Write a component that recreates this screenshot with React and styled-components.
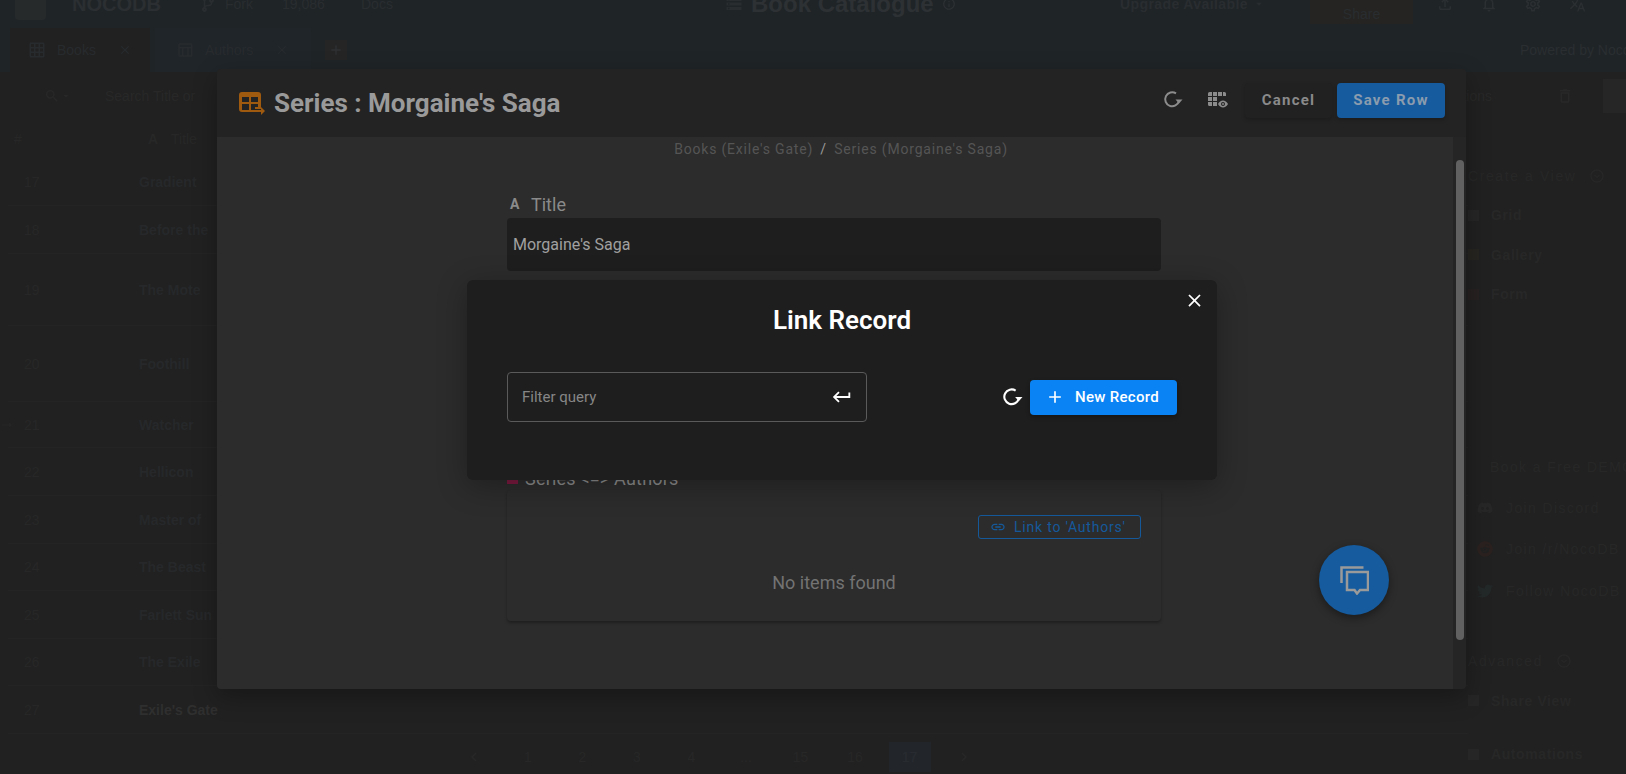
import React from "react";
import styled, { createGlobalStyle } from "styled-components";
import {
  MdAdd,
  MdClose,
  MdKeyboardReturn,
  MdLink,
  MdChevronLeft,
  MdChevronRight,
  MdGridOn,
  MdOutlineTableChart,
  MdSearch,
  MdOutlineCalendarMonth,
  MdDeleteOutline,
  MdOutlineFileUpload,
  MdNotificationsNone,
  MdTranslate,
  MdArrowRightAlt,
  MdArrowDropDown,
  MdOutlineInfo,
  MdOutlineExpandCircleDown,
  MdOutlineStorage,
  MdOutlineSettings,
} from "react-icons/md";
import { FaDiscord, FaReddit, FaTwitter, FaCodeBranch } from "react-icons/fa";

const rows = [
  { num: 17, title: "Gradient", height: 48 },
  { num: 18, title: "Before the", height: 48 },
  { num: 19, title: "The Mote", height: 72 },
  { num: 20, title: "Foothill", height: 76 },
  { num: 21, title: "Watcher", height: 46, current: true },
  { num: 22, title: "Hellicon", height: 48 },
  { num: 23, title: "Master of", height: 48 },
  { num: 24, title: "The Beast", height: 47 },
  { num: 25, title: "Farlett Sun", height: 48 },
  { num: 26, title: "The Exile", height: 47 },
  { num: 27, title: "Exile's Gate", height: 48, strong: true },
];

const pages = ["1", "2", "3", "4", "...", "15", "16", "17"];

const RefreshIcon = ({ size = 20 }) => (
  <svg width={size} height={size} viewBox="0 0 20 20" fill="none">
    <path d="M16 11a7 7 0 1 1-3-7.600" stroke="currentColor" strokeWidth="2" />
    <path d="M12.500 9.500h7L16 13.500z" fill="currentColor" />
  </svg>
);

const TableArrowIcon = () => (
  <svg width="26" height="23" viewBox="0 0 26 23">
    <path
      fillRule="evenodd"
      fill="#a05a10"
      d="M3 0h16a3 3 0 0 1 3 3v14h-6v3H3a3 3 0 0 1-3-3V3a3 3 0 0 1 3-3zM3 5v5h7V5zm9 0v5h7V5zM3 12v6h7v-6zm9 0v6h4v-3h3v-3z"
    />
    <path d="M15 18h7v-3l4 4-4 4v-3h-7z" fill="#a05a10" />
  </svg>
);

const TableEyeIcon = () => (
  <svg width="20" height="16" viewBox="0 0 20 16" fill="#8c8c8c">
    <path d="M0 1.500A1.500 1.500 0 0 1 1.500 0H4v4H0zM5 0h4v4H5zM10 0h4v4h-4zM15 0h1.500A1.500 1.500 0 0 1 18 1.500V4h-3zM0 5h4v4H0zM5 5h4v4H5zM0 10h4v4H1.500A1.500 1.500 0 0 1 0 12.500zM5 10h4v4H5z" />
    <path
      fillRule="evenodd"
      d="M10 12c1.200-2.200 3-3.400 5-3.400s3.800 1.200 5 3.400c-1.200 2.200-3 3.400-5 3.400s-3.800-1.200-5-3.400zm5 2a2 2 0 1 0 0-4 2 2 0 0 0 0 4z"
    />
    <circle cx="15" cy="12" r="1" />
  </svg>
);

const ChatIcon = () => (
  <svg width="30" height="30" viewBox="0 0 30 30" fill="none" stroke="#9a9a9a" strokeWidth="2.500">
    <path d="M2.500 18V2.500h22" />
    <path d="M8 7h21v18h-8l-3 3.500-2.500-3.500H8z" />
  </svg>
);

const App = () => (
  <Page>
    <GlobalStyle />

    <TopBar>
      <Logo />
      <Brand>NOCODB</Brand>
      <TopLink $width={82}>
        <FaCodeBranch size={16} />
        Fork
      </TopLink>
      <TopLink $width={79}>19,086</TopLink>
      <TopLink $width={364}>Docs</TopLink>
      <ProjectIcon>
        <MdOutlineStorage size={18} />
      </ProjectIcon>
      <ProjectName>
        Book Catalogue
        <MdOutlineInfo size={14} />
      </ProjectName>
      <Upgrade>
        Upgrade Available
        <MdArrowDropDown size={14} />
      </Upgrade>
      <ShareButton>Share</ShareButton>
      <TopIcons>
        <MdOutlineFileUpload size={18} />
        <MdNotificationsNone size={18} />
        <MdOutlineSettings size={18} />
        <MdTranslate size={18} />
      </TopIcons>
    </TopBar>

    <TabBar>
      <Tab $active>
        <MdGridOn size={18} />
        Books
        <TabClose>
          <MdClose size={14} />
        </TabClose>
      </Tab>
      <Tab>
        <MdOutlineTableChart size={18} />
        Authors
        <TabClose>
          <MdClose size={14} />
        </TabClose>
      </Tab>
      <AddTab>
        <MdAdd size={16} />
      </AddTab>
      <Powered>Powered by NocoDB</Powered>
    </TabBar>

    <Toolbar>
      <MdSearch size={16} />
      <MdArrowDropDown size={12} />
      <SearchText>Search Title or</SearchText>
      <ToolbarOptions>Options</ToolbarOptions>
      <ToolbarTrash>
        <MdDeleteOutline size={18} />
      </ToolbarTrash>
      <ToolbarBox />
    </Toolbar>

    <Main>
      <TableArea>
        <HeaderRow>
          <HeaderNum>#</HeaderNum>
          <HeaderGlyph>A</HeaderGlyph>
          <span>Title</span>
        </HeaderRow>
        {rows.map((row) => (
          <Row key={row.num} $height={row.height}>
            {row.current && (
              <RowMarker>
                <MdArrowRightAlt size={14} />
              </RowMarker>
            )}
            <RowNum>{row.num}</RowNum>
            <RowTitle $strong={row.strong}>{row.title}</RowTitle>
          </Row>
        ))}
        <Pagination>
          <PageItem>
            <MdChevronLeft size={18} />
          </PageItem>
          {pages.map((page) => (
            <PageItem key={page} $active={page === "17"}>
              {page}
            </PageItem>
          ))}
          <PageItem>
            <MdChevronRight size={18} />
          </PageItem>
        </Pagination>
      </TableArea>

      <Sidebar>
        <SideHeading>
          Create a View
          <MdOutlineExpandCircleDown size={16} />
        </SideHeading>
        <SideItem>
          <SideDot $color="#262626" />
          Grid
        </SideItem>
        <SideItem>
          <SideDot $color="#272520" />
          Gallery
        </SideItem>
        <SideItem>
          <SideDot $color="#272121" />
          Form
        </SideItem>
        <SupportList>
          <SupportItem>
            <MdOutlineCalendarMonth size={16} />
            Book a Free DEMO
          </SupportItem>
          <SupportItem>
            <FaDiscord size={16} />
            Join Discord
          </SupportItem>
          <SupportItem>
            <FaReddit size={16} color="#2b2220" />
            Join /r/NocoDB
          </SupportItem>
          <SupportItem>
            <FaTwitter size={16} color="#232829" />
            Follow NocoDB
          </SupportItem>
        </SupportList>
        <SideHeading>
          Advanced
          <MdOutlineExpandCircleDown size={16} />
        </SideHeading>
        <SideItem>
          <SideDot $color="#262626" />
          Share View
        </SideItem>
        <SideItem $gap>
          <SideDot $color="#262626" />
          Automations
        </SideItem>
      </Sidebar>
    </Main>

    <RowDialog>
      <DialogHeader>
        <TableArrowIcon />
        <DialogTitle>Series : Morgaine's Saga</DialogTitle>
        <HeaderActions>
          <HeaderIcon>
            <RefreshIcon />
          </HeaderIcon>
          <HeaderIcon>
            <TableEyeIcon />
          </HeaderIcon>
          <CancelButton>Cancel</CancelButton>
          <SaveButton>Save Row</SaveButton>
        </HeaderActions>
      </DialogHeader>
      <DialogBody>
        <BodyScroll>
          <Breadcrumb>
            Books (Exile's Gate) <Slash>/</Slash> Series (Morgaine's Saga)
          </Breadcrumb>
          <Form>
            <FieldLabel>
              <TitleGlyph>A</TitleGlyph>
              Title
            </FieldLabel>
            <TitleValue>Morgaine's Saga</TitleValue>
            <LinkLabel>
              <RelationIcon />
              Series &lt;=&gt; Authors
            </LinkLabel>
            <LinkCard>
              <LinkButton>
                <MdLink size={16} />
                Link to 'Authors'
              </LinkButton>
              <EmptyText>No items found</EmptyText>
            </LinkCard>
          </Form>
        </BodyScroll>
        <ScrollTrack>
          <ScrollThumb />
        </ScrollTrack>
      </DialogBody>
    </RowDialog>

    <ChatButton>
      <ChatIcon />
    </ChatButton>

    <LinkDialog>
      <CloseButton>
        <MdClose size={21} />
      </CloseButton>
      <LinkTitle>Link Record</LinkTitle>
      <LinkControls>
        <FilterBox>
          <FilterText>Filter query</FilterText>
          <MdKeyboardReturn size={22} color="#fff" />
        </FilterBox>
        <LinkActions>
          <ReloadButton>
            <RefreshIcon size={21} />
          </ReloadButton>
          <NewRecordButton>
            <MdAdd size={20} />
            New Record
          </NewRecordButton>
        </LinkActions>
      </LinkControls>
    </LinkDialog>
  </Page>
);

const GlobalStyle = createGlobalStyle`
  html, body {
    margin: 0;
    padding: 0;
    background: #212121;
  }

  * {
    box-sizing: border-box;
  }
`;

const Page = styled.div`
  position: relative;
  width: 1626px;
  height: 774px;
  overflow: hidden;
  background: #212121;
  color: #272727;
  font-family: "Liberation Sans", Arial, sans-serif;
`;

/* dimmed app behind the dialogs */
const TopBar = styled.div`
  display: flex;
  align-items: center;
  height: 28px;
  padding: 0 0 20px 15px;
  background: #1f2427;
  color: #292d30;
  font-size: 14px;
`;

const Logo = styled.div`
  flex: none;
  width: 31px;
  height: 32px;
  margin-right: 26px;
  border-radius: 10px 10px 4px 4px;
  background: #272a2b;
`;

const Brand = styled.span`
  flex: none;
  width: 128px;
  font-size: 20px;
  font-weight: 700;
  color: #2b2f32;
`;

const TopLink = styled.span`
  flex: none;
  display: flex;
  align-items: center;
  gap: 9px;
  width: ${(p) => p.$width}px;
`;

const ProjectIcon = styled.span`
  flex: none;
  display: flex;
  width: 26px;
`;

const ProjectName = styled.span`
  flex: none;
  display: flex;
  align-items: center;
  gap: 8px;
  width: 369px;
  font-size: 24px;
  font-weight: 700;
  color: #2d3134;
  white-space: nowrap;
`;

const Upgrade = styled.span`
  flex: none;
  display: flex;
  align-items: center;
  gap: 4px;
  width: 190px;
  font-weight: 700;
  letter-spacing: 0.4px;
  white-space: nowrap;
`;

const ShareButton = styled.div`
  flex: none;
  width: 103px;
  height: 40px;
  padding-top: 22px;
  text-align: center;
  background: #252422;
`;

const TopIcons = styled.div`
  flex: none;
  display: flex;
  gap: 26px;
  margin-left: 23px;
  color: #2b2f32;
`;

const TabBar = styled.div`
  display: flex;
  align-items: stretch;
  height: 44px;
  padding-left: 10px;
  background: #1f2427;
  font-size: 14px;
`;

const Tab = styled.div`
  display: flex;
  align-items: center;
  gap: 11px;
  width: ${(p) => (p.$active ? "140px" : "156px")};
  margin-right: 5px;
  padding-left: ${(p) => (p.$active ? "18px" : "21px")};
  background: ${(p) => (p.$active ? "#212121" : "#1f2529")};
  color: #282b2e;
`;

const TabClose = styled.span`
  display: flex;
  margin-left: 11px;
`;

const AddTab = styled.div`
  display: flex;
  align-items: center;
  justify-content: center;
  align-self: center;
  width: 22px;
  height: 20px;
  margin-left: 9px;
  background: #252525;
  color: #2e3133;
`;

const Powered = styled.span`
  align-self: center;
  margin-left: auto;
  width: 106px;
  white-space: nowrap;
  color: #2a2e31;
`;

const Toolbar = styled.div`
  display: flex;
  align-items: center;
  height: 48px;
  padding-left: 44px;
  color: #282828;
  font-size: 14px;
`;

const SearchText = styled.span`
  margin-left: 33px;
`;

const ToolbarOptions = styled.span`
  margin-left: auto;
`;

const ToolbarTrash = styled.span`
  display: flex;
  margin: 0 29px 0 64px;
`;

const ToolbarBox = styled.div`
  width: 23px;
  height: 34px;
  background: #262626;
`;

const Main = styled.div`
  display: flex;
  height: 654px;
`;

const TableArea = styled.div`
  flex: 1;
  padding-left: 8px;
`;

const HeaderRow = styled.div`
  display: flex;
  align-items: center;
  height: 38px;
  padding-left: 6px;
  font-size: 14px;
`;

const HeaderNum = styled.span`
  width: 134px;
`;

const HeaderGlyph = styled.span`
  width: 23px;
  font-weight: 700;
`;

const Row = styled.div`
  position: relative;
  display: flex;
  align-items: center;
  height: ${(p) => p.$height}px;
  padding-left: 16px;
  border-bottom: 1px solid #242424;
  font-size: 14px;
`;

const RowMarker = styled.span`
  position: absolute;
  left: -8px;
  display: flex;
`;

const RowNum = styled.span`
  width: 115px;
`;

const RowTitle = styled.span`
  font-weight: 700;
  color: ${(p) => (p.$strong ? "#2f2f2f" : "#26282a")};
`;

const Pagination = styled.div`
  display: flex;
  gap: 12.5px;
  margin-top: 8px;
  padding-left: 444.5px;
`;

const PageItem = styled.div`
  flex: none;
  display: flex;
  align-items: center;
  justify-content: center;
  width: 42px;
  height: 30px;
  font-size: 14px;
  color: ${(p) => (p.$active ? "#282c31" : "#272727")};
  background: ${(p) => (p.$active ? "#22262b" : "transparent")};
`;

const Sidebar = styled.div`
  flex: none;
  display: flex;
  flex-direction: column;
  width: 158px;
  padding-top: 44px;
  font-size: 14px;
`;

const SideHeading = styled.div`
  display: flex;
  align-items: center;
  gap: 13px;
  height: 24px;
  margin-bottom: 8px;
  letter-spacing: 1.6px;
  white-space: nowrap;
`;

const SideItem = styled.div`
  display: flex;
  align-items: center;
  gap: 12px;
  height: 40px;
  margin-top: ${(p) => (p.$gap ? "14px" : "0")};
  font-weight: 700;
  letter-spacing: 0.6px;
  white-space: nowrap;
`;

const SideDot = styled.span`
  flex: none;
  width: 11px;
  height: 11px;
  background: ${(p) => p.$color};
`;

const SupportList = styled.div`
  display: flex;
  flex-direction: column;
  margin: 132px 0 38px;
`;

const SupportItem = styled.div`
  display: flex;
  align-items: center;
  gap: 13px;
  height: 41.3px;
  padding-left: 9px;
  letter-spacing: 1.4px;
  white-space: nowrap;
`;

/* row editor */
const RowDialog = styled.div`
  position: absolute;
  top: 69px;
  left: 217px;
  display: flex;
  flex-direction: column;
  width: 1249px;
  height: 620px;
  overflow: hidden;
  border-radius: 4px;
  background: #232323;
  box-shadow: 0 8px 24px rgba(0, 0, 0, 0.3);
`;

const DialogHeader = styled.div`
  flex: none;
  display: flex;
  align-items: center;
  height: 68px;
  padding: 0 21px 0 22px;
  background: #232323;
`;

const DialogTitle = styled.h1`
  margin: 0 0 0 9px;
  color: #9a9a9a;
  font-family: Roboto, sans-serif;
  font-size: 26px;
  font-weight: 700;
`;

const HeaderActions = styled.div`
  display: flex;
  align-items: center;
  margin-left: auto;
  margin-top: -6px;
`;

const HeaderIcon = styled.div`
  display: flex;
  align-items: center;
  justify-content: center;
  width: 45px;
  color: #8c8c8c;
`;

const CancelButton = styled.div`
  display: flex;
  align-items: center;
  justify-content: center;
  width: 87px;
  height: 35px;
  margin: 0 5px 0 5px;
  border-radius: 4px;
  background: #212121;
  box-shadow: 0 2px 4px rgba(0, 0, 0, 0.2);
  color: #8a8a8a;
  font-family: Roboto, sans-serif;
  font-size: 15px;
  font-weight: 700;
  letter-spacing: 1.25px;
`;

const SaveButton = styled(CancelButton)`
  width: 108px;
  margin: 0;
  background: #155b9e;
  color: #8a9cae;
`;

const DialogBody = styled.div`
  flex: 1;
  display: flex;
  min-height: 0;
`;

const BodyScroll = styled.div`
  flex: 1;
  display: flex;
  flex-direction: column;
  align-items: center;
  background: #2c2c2c;
`;

const Breadcrumb = styled.div`
  height: 24px;
  padding-left: 12px;
  line-height: 24px;
  color: #555555;
  font-family: Roboto, sans-serif;
  font-size: 14px;
  letter-spacing: 0.8px;
  white-space: pre;
`;

const Slash = styled.span`
  color: #9a9a9a;
  margin: 0 3px;
`;

const Form = styled.div`
  display: flex;
  flex-direction: column;
  width: 654px;
  margin: 31px 2px 0 0;
`;

const FieldLabel = styled.div`
  display: flex;
  align-items: center;
  height: 24px;
  color: #8a8a8a;
  font-family: Roboto, sans-serif;
  font-size: 18px;
`;

const TitleGlyph = styled.span`
  width: 24px;
  padding-left: 3px;
  font-size: 14px;
  font-weight: 700;
`;

const TitleValue = styled.div`
  display: flex;
  align-items: center;
  height: 53px;
  margin-top: 2px;
  padding-left: 6px;
  border-radius: 4px;
  background: #1e1e1e;
  color: #a0a0a0;
  font-family: Roboto, sans-serif;
  font-size: 16px;
`;

const LinkLabel = styled(FieldLabel)`
  gap: 7px;
  margin-top: 195px;
  letter-spacing: 0.2px;
`;

const RelationIcon = styled.span`
  width: 11px;
  height: 11px;
  background: #7a1a3e;
`;

const LinkCard = styled.div`
  display: flex;
  flex-direction: column;
  align-items: flex-end;
  height: 131px;
  padding: 25px 20px 0 0;
  border-radius: 4px;
  background: #2c2c2c;
  box-shadow: 0 2px 3px rgba(0, 0, 0, 0.3);
`;

const LinkButton = styled.div`
  display: flex;
  align-items: center;
  gap: 8px;
  width: 163px;
  height: 24px;
  padding-left: 11px;
  border: 1px solid #15599b;
  border-radius: 3px;
  color: #15599b;
  font-family: Roboto, sans-serif;
  font-size: 14px;
  letter-spacing: 0.8px;
  white-space: nowrap;
`;

const EmptyText = styled.div`
  align-self: center;
  margin: 33px 0 0 20px;
  color: #737373;
  font-family: Roboto, sans-serif;
  font-size: 18px;
`;

const ScrollTrack = styled.div`
  flex: none;
  width: 13px;
  padding: 23px 2px 0 3px;
  background: #252525;
`;

const ScrollThumb = styled.div`
  height: 480px;
  border-radius: 4px;
  background: #616161;
`;

const ChatButton = styled.div`
  position: absolute;
  top: 545px;
  left: 1319px;
  display: flex;
  align-items: center;
  justify-content: center;
  width: 70px;
  height: 70px;
  border-radius: 50%;
  background: #155b9e;
  box-shadow: 0 3px 8px rgba(0, 0, 0, 0.4);
`;

/* link record popup */
const LinkDialog = styled.div`
  position: absolute;
  top: 280px;
  left: 467px;
  width: 750px;
  height: 200px;
  padding: 0 40px;
  border-radius: 6px;
  background: #1e1e1e;
  box-shadow: 0 6px 30px rgba(0, 0, 0, 0.3);
`;

const CloseButton = styled.div`
  position: absolute;
  top: 10px;
  right: 12px;
  display: flex;
  color: #fff;
`;

const LinkTitle = styled.h2`
  margin: 23px 0 0;
  padding-top: 1px;
  line-height: 32px;
  text-align: center;
  color: #fff;
  font-family: Roboto, sans-serif;
  font-size: 26px;
  font-weight: 600;
`;

const LinkControls = styled.div`
  display: flex;
  align-items: center;
  justify-content: space-between;
  margin-top: 36px;
`;

const FilterBox = styled.div`
  display: flex;
  align-items: center;
  justify-content: space-between;
  width: 360px;
  height: 50px;
  padding: 0 13px 0 14px;
  border: 1px solid #5a5a5a;
  border-radius: 4px;
`;

const FilterText = styled.span`
  color: #868686;
  font-family: Roboto, sans-serif;
  font-size: 15px;
`;

const LinkActions = styled.div`
  display: flex;
  align-items: center;
  gap: 7px;
`;

const ReloadButton = styled.div`
  display: flex;
  color: #fff;
`;

const NewRecordButton = styled.div`
  display: flex;
  align-items: center;
  gap: 10px;
  width: 147px;
  height: 35px;
  padding-left: 15px;
  border-radius: 4px;
  background: #0a84f5;
  box-shadow: 0 2px 4px rgba(0, 0, 0, 0.3);
  color: #fff;
  font-family: Roboto, sans-serif;
  font-size: 15px;
  font-weight: 500;
  letter-spacing: 0.3px;
  white-space: nowrap;
`;

export default App;
